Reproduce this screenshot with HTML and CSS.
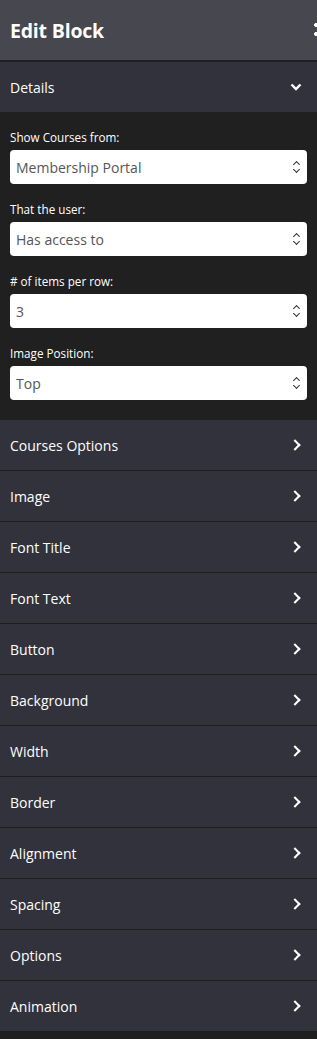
FILE: index.html
```html
<!DOCTYPE html>
<html lang="en">
<head>
    <meta charset="UTF-8">
    <meta name="viewport" content="width=device-width, initial-scale=1.0">
    <title>Edit Block</title>
    <link rel="stylesheet" href="styles.css">
</head>
<body>
    <div class="panel">
        <div class="panel-head">
            <h1>Edit Block</h1>
            <i class="dots"></i>
        </div>

        <div class="section open">
            <div class="section-title">
                <span>Details</span>
                <svg class="chev" width="12" height="8" viewBox="0 0 12 8"><path d="M1.5 1.5 L6 6 L10.5 1.5" fill="none" stroke="#fff" stroke-width="2.4"/></svg>
            </div>
            <div class="section-body">
                <div class="field">
                    <label>Show Courses from:</label>
                    <div class="select"><span>Membership Portal</span><i class="arrows"></i></div>
                </div>
                <div class="field">
                    <label>That the user:</label>
                    <div class="select"><span>Has access to</span><i class="arrows"></i></div>
                </div>
                <div class="field">
                    <label># of items per row:</label>
                    <div class="select"><span>3</span><i class="arrows"></i></div>
                </div>
                <div class="field">
                    <label>Image Position:</label>
                    <div class="select"><span>Top</span><i class="arrows"></i></div>
                </div>
            </div>
        </div>

        <div class="section"><div class="section-title"><span>Courses Options</span><i class="right"></i></div></div>
        <div class="section"><div class="section-title"><span>Image</span><i class="right"></i></div></div>
        <div class="section"><div class="section-title"><span>Font Title</span><i class="right"></i></div></div>
        <div class="section"><div class="section-title"><span>Font Text</span><i class="right"></i></div></div>
        <div class="section"><div class="section-title"><span>Button</span><i class="right"></i></div></div>
        <div class="section"><div class="section-title"><span>Background</span><i class="right"></i></div></div>
        <div class="section"><div class="section-title"><span>Width</span><i class="right"></i></div></div>
        <div class="section"><div class="section-title"><span>Border</span><i class="right"></i></div></div>
        <div class="section"><div class="section-title"><span>Alignment</span><i class="right"></i></div></div>
        <div class="section"><div class="section-title"><span>Spacing</span><i class="right"></i></div></div>
        <div class="section"><div class="section-title"><span>Options</span><i class="right"></i></div></div>
        <div class="section"><div class="section-title"><span>Animation</span><i class="right"></i></div></div>
        <div class="panel-foot"></div>
    </div>
</body>
</html>
```

FILE: styles.css
```css
body {
    margin: 0;
    background: #222;
    font-family: "Open Sans", "Noto Sans", sans-serif;
    color: #fff;
}
.panel {
    width: 317px;
    overflow: hidden;
}
.panel-head {
    height: 60px;
    background: #46474f;
    border-bottom: 2px solid #1e1f24;
    display: flex;
    align-items: center;
    justify-content: space-between;
    padding-left: 10px;
}
.panel-head h1 {
    margin: 0;
    font-size: 19.5px;
    font-weight: 700;
    letter-spacing: -0.2px;
}
/* menu dots, cut by the right edge like in the app */
.dots {
    width: 4px;
    height: 13px;
    margin-right: -1px;
    margin-top: -1px;
    background:
        radial-gradient(circle, #fff 1.7px, transparent 2.2px) 0 0 / 4px 4px no-repeat,
        radial-gradient(circle, #fff 1.7px, transparent 2.2px) 0 9px / 4px 4px no-repeat;
}
.section-title {
    height: 50px;
    background: #31323b;
    border-bottom: 1px solid #1d1e22;
    display: flex;
    align-items: center;
    justify-content: space-between;
    padding: 0 14px 0 10px;
    font-size: 14px;
}
.section.open .section-title {
    border-bottom: none;
}
.chev {
    margin-right: 1px;
}
.right {
    width: 6px;
    height: 6px;
    border-top: 2.4px solid #fff;
    border-right: 2.4px solid #fff;
    transform: rotate(45deg);
    margin-right: 4px;
}
.section-body {
    background: #202020;
    padding: 17px 10px 20px;
}
.field {
    margin-bottom: 17px;
}
.field:last-child {
    margin-bottom: 0;
}
.field label {
    display: block;
    font-size: 11.7px;
    margin-bottom: 4px;
    line-height: 17px;
}
.select {
    height: 34px;
    background: #fff;
    border-radius: 4px;
    display: flex;
    align-items: center;
    justify-content: space-between;
    padding: 0 6px;
    color: #555;
    font-size: 14px;
}
.arrows {
    width: 8px;
    height: 14px;
    position: relative;
}
.arrows::before, .arrows::after {
    content: "";
    position: absolute;
    left: 1px;
    width: 4px;
    height: 4px;
    border-left: 1.5px solid #333;
    border-top: 1.5px solid #333;
}
.arrows::before {
    top: 2px;
    transform: rotate(45deg);
}
.arrows::after {
    bottom: 2px;
    transform: rotate(-135deg);
}
.panel-foot {
    height: 7px;
    background: #1f1f1f;
}
```
